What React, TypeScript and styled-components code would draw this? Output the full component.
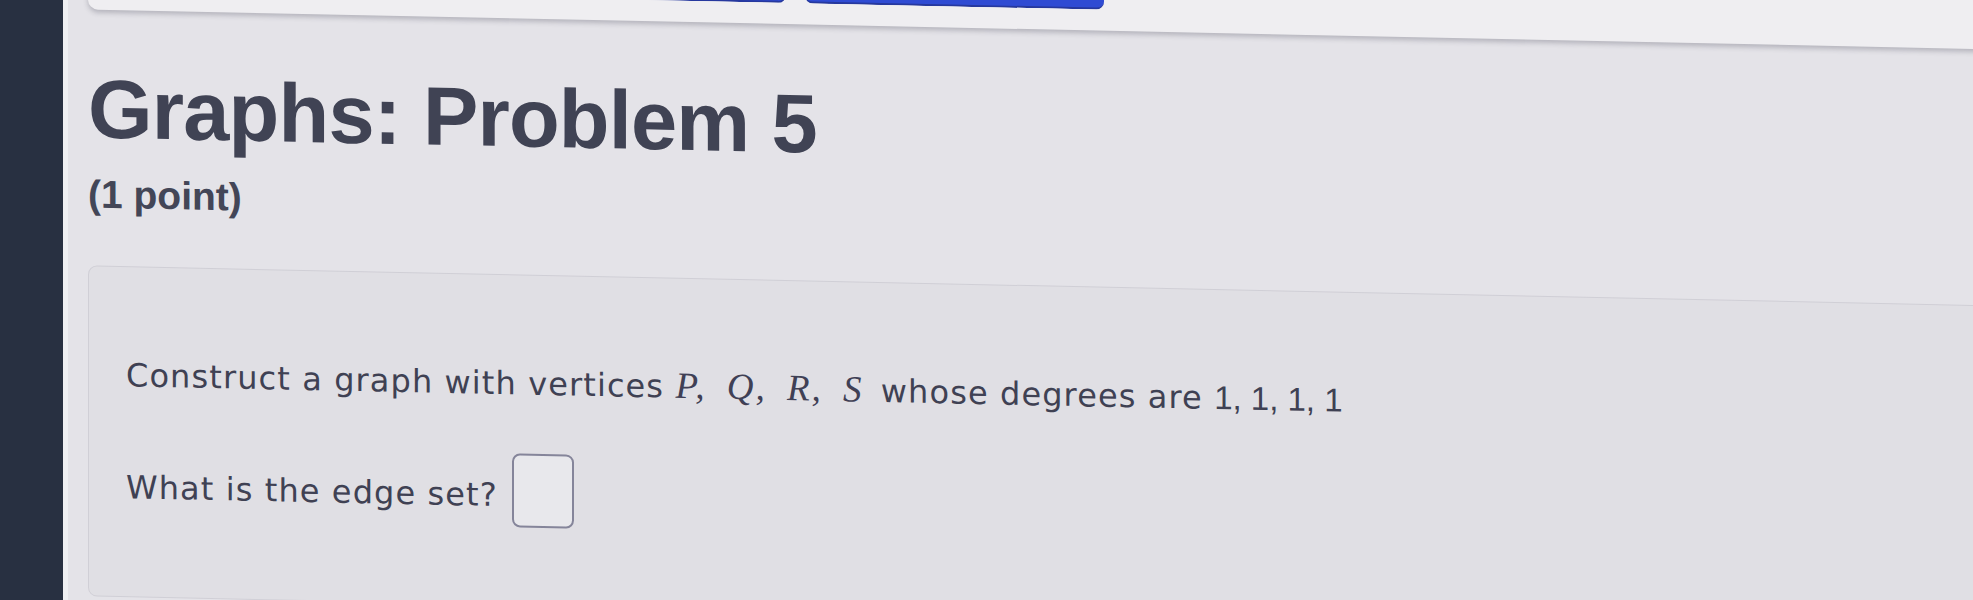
import styled, { createGlobalStyle } from 'styled-components';

const GlobalStyle = createGlobalStyle`
  html, body {
    margin: 0;
    padding: 0;
    height: 600px;
    overflow: hidden;
    background: #e4e3e8;
  }
`;

const Page = styled.div`
  display: flex;
  height: 600px;
  width: 100%;
  overflow: hidden;
`;

const Sidebar = styled.aside`
  flex: 0 0 63px;
  background: #283041;
`;

const Main = styled.main`
  flex: 1;
  min-width: 0;
  overflow: hidden;
  border-left: 5px solid #efeff2;
  background: #e4e3e8;
`;

// the photo is taken at a slight angle, so the whole column is skewed
const Content = styled.div`
  width: calc(100% + 80px);
  padding-left: 20px;
  box-sizing: border-box;
  transform: skewY(1.2deg);
  transform-origin: 0 0;
`;

const TopCard = styled.div`
  margin-top: -52px;
  padding: 0 0 21px 472px;
  display: flex;
  gap: 19px;
  background: #efeef1;
  border-radius: 0 0 0 10px;
  box-shadow: 0 3px 5px rgba(60, 60, 80, 0.28);
`;

const NavButton = styled.div<{ $w: number }>`
  width: ${(p) => p.$w}px;
  height: 40px;
  border-radius: 0 0 8px 8px;
  background: #2f4bd3;
  border-bottom: 2px solid #26389e;
  box-sizing: border-box;
`;

const Title = styled.h2`
  margin: 50px 0 0;
  font-family: 'Liberation Sans', Arial, sans-serif;
  font-weight: 700;
  font-size: 83px;
  line-height: 1.2;
  letter-spacing: -0.8px;
  color: #404354;
`;

const Points = styled.div`
  margin-top: 6px;
  font-family: 'Liberation Sans', Arial, sans-serif;
  font-weight: 700;
  font-size: 39px;
  line-height: 57px;
  color: #434657;
`;

const ProblemCard = styled.section`
  margin-top: 43px;
  padding: 83px 0 77px 37px;
  background: #e0dfe4;
  border: 1px solid #d0cfd6;
  border-radius: 9px;
`;

const Para = styled.p<{ $gap?: number }>`
  margin: ${(p) => p.$gap ?? 0}px 0 0;
  font-family: 'DejaVu Sans', Verdana, sans-serif;
  font-size: 32px;
  line-height: 48px;
  letter-spacing: 1.1px;
  color: #3f4153;
`;

const MathVars = styled.span`
  margin-right: 6px;
  font-family: 'Liberation Serif', 'Times New Roman', serif;
  font-style: italic;
  font-size: 37px;
  letter-spacing: 2px;
  word-spacing: 9px;
  color: #3f4055;
`;

const Numbers = styled.span`
  font-family: 'Liberation Sans', Arial, sans-serif;
  font-size: 33px;
  letter-spacing: 0;
`;

const AnswerBox = styled.span`
  display: inline-block;
  width: 62px;
  height: 74px;
  margin-left: 14px;
  vertical-align: -21px;
  box-sizing: border-box;
  border: 2px solid #85859a;
  border-radius: 8px;
  background: #e8e8ec;
`;

export default function App() {
  return (
    <>
      <GlobalStyle />
      <Page>
        <Sidebar />
        <Main>
          <Content>
            <TopCard>
              <NavButton $w={226} />
              <NavButton $w={299} />
            </TopCard>
            <Title>Graphs: Problem 5</Title>
            <Points>(1 point)</Points>
            <ProblemCard>
              <Para>
                Construct a graph with vertices <MathVars>P, Q, R, S</MathVars> whose degrees are{' '}
                <Numbers>1, 1, 1, 1</Numbers>
              </Para>
              <Para $gap={46}>
                What is the edge set?<AnswerBox />
              </Para>
            </ProblemCard>
          </Content>
        </Main>
      </Page>
    </>
  );
}
